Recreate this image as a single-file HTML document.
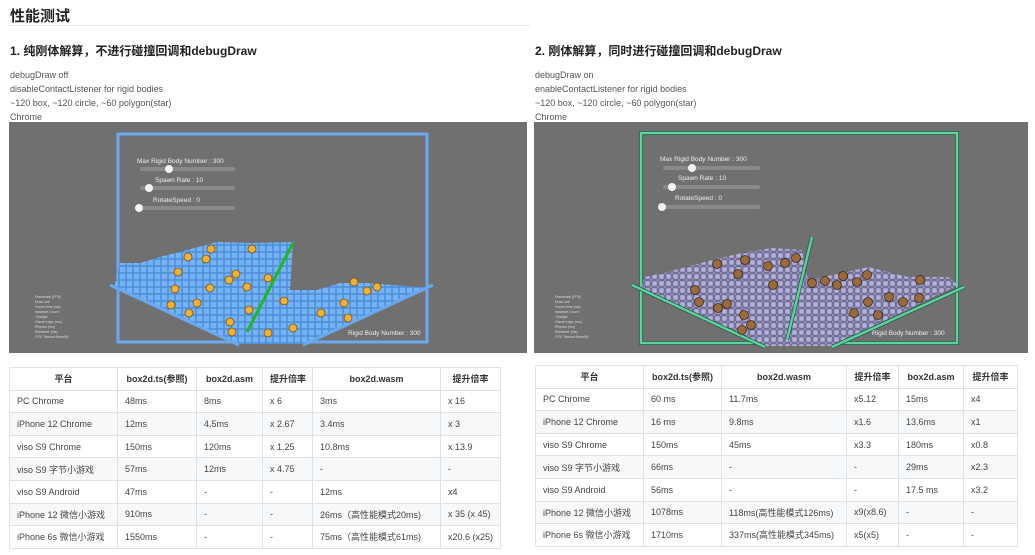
<!DOCTYPE html>
<html><head><meta charset="utf-8">
<style>
*{margin:0;padding:0;box-sizing:border-box}
body{width:1035px;height:555px;background:#fff;position:relative;overflow:hidden;font-family:"Liberation Sans","Noto Sans CJK SC",sans-serif;color:#333}
.a{position:absolute;white-space:nowrap}
.h1{left:10px;top:5px;font-size:15px;font-weight:bold;color:#222}
.hr{left:8px;top:25px;width:522px;height:1px;background:#e6e6e6}
.h2{font-size:12px;font-weight:bold;color:#222;top:42px}
.p{font-size:9px;color:#555;line-height:14px;top:68px}
table{position:absolute;border-collapse:collapse;font-size:9px;color:#444;table-layout:fixed}
td,th{border:1px solid #dfe2e5;height:22.6px;padding:0 7px;text-align:left;white-space:nowrap;overflow:hidden}
th{text-align:center;font-weight:bold;color:#333}
tr:nth-child(odd) td{background:#f6f8fa}
svg{position:absolute}
</style></head><body>
<div class="a h1">性能测试</div>
<div class="a hr"></div>
<div class="a h2" style="left:10px">1. 纯刚体解算，不进行碰撞回调和debugDraw</div>
<div class="a h2" style="left:535px">2. 刚体解算，同时进行碰撞回调和debugDraw</div>
<div class="a p" style="left:10px">debugDraw off<br>disableContactListener for rigid bodies<br>~120 box, ~120 circle, ~60 polygon(star)<br>Chrome</div>
<div class="a p" style="left:535px">debugDraw on<br>enableContactListener for rigid bodies<br>~120 box, ~120 circle, ~60 polygon(star)<br>Chrome</div>

<svg width="1035" height="555" style="left:0;top:0" font-family="Liberation Sans, sans-serif">
<defs>
<pattern id="pb" width="7" height="7" patternUnits="userSpaceOnUse"><rect width="7" height="7" fill="#4f8fd8"/><rect x="0.8" y="0.8" width="5.4" height="5.4" fill="#74b4f6"/></pattern>
<pattern id="pv" width="7" height="7" patternUnits="userSpaceOnUse"><rect width="7" height="7" fill="#b4b2dc"/><rect x="0.8" y="0.8" width="5.4" height="5.4" fill="none" stroke="#3c3a5c" stroke-width="0.7"/></pattern>
</defs>
<!-- left canvas -->
<rect x="9" y="122" width="518" height="231" fill="#707070"/>
<rect x="118" y="134" width="309" height="208" fill="none" stroke="#6aa8f0" stroke-width="3"/>
<polygon points="114,288 120,263 140,263 160,257 187,250 217,242 253,243 293,242 290,290 317,290 340,283 367,283 417,287 432,287 303,344 239,344" fill="url(#pb)"/>
<line x1="110" y1="285" x2="239" y2="345" stroke="#6aa8f0" stroke-width="3"/>
<line x1="303" y1="345" x2="433" y2="285" stroke="#6aa8f0" stroke-width="3"/>
<line x1="293" y1="243" x2="247" y2="332" stroke="#1fb81f" stroke-width="3"/>
<g fill="#f0b030" stroke="#7a5020" stroke-width="0.8">
<circle cx="188" cy="257" r="4"/><circle cx="211" cy="249" r="4"/><circle cx="206" cy="259" r="4"/><circle cx="178" cy="272" r="4"/><circle cx="229" cy="280" r="4"/><circle cx="252" cy="249" r="4"/><circle cx="236" cy="274" r="4"/><circle cx="268" cy="278" r="4"/><circle cx="175" cy="289" r="4"/><circle cx="210" cy="288" r="4"/><circle cx="247" cy="287" r="4"/><circle cx="171" cy="305" r="4"/><circle cx="197" cy="303" r="4"/><circle cx="189" cy="313" r="4"/><circle cx="249" cy="310" r="4"/><circle cx="230" cy="322" r="4"/><circle cx="232" cy="332" r="4"/><circle cx="268" cy="333" r="4"/><circle cx="284" cy="301" r="4"/><circle cx="293" cy="328" r="4"/><circle cx="321" cy="313" r="4"/><circle cx="344" cy="303" r="4"/><circle cx="348" cy="318" r="4"/><circle cx="354" cy="282" r="4"/><circle cx="367" cy="291" r="4"/><circle cx="377" cy="287" r="4"/>
</g>
<g font-size="6.5" fill="#eee">
<text x="137" y="163">Max Rigid Body Number :  300</text>
<text x="155" y="182">Spawn Rate :          10</text>
<text x="153" y="202">RotateSpeed :         0</text>
<text x="348" y="335">Rigid Body Number :  300</text>
</g>
<g fill="#8a8a8a"><rect x="140" y="167" width="95" height="4" rx="2"/><rect x="140" y="186" width="95" height="4" rx="2"/><rect x="140" y="206" width="95" height="4" rx="2"/></g>
<g fill="#f2f2f2"><circle cx="169" cy="169" r="4"/><circle cx="149" cy="188" r="4"/><circle cx="139" cy="208" r="4"/></g>
<g fill="#ddd"><rect x="35" y="296" width="30" height="44" fill="none"/>
<text x="35" y="298" font-size="3.5">Framerate (FPS)</text><text x="35" y="303" font-size="3.5">Draw call</text><text x="35" y="308" font-size="3.5">Frame time (ms)</text><text x="35" y="313" font-size="3.5">Instance Count</text><text x="35" y="318" font-size="3.5">Triangle</text><text x="35" y="323" font-size="3.5">Game Logic (ms)</text><text x="35" y="328" font-size="3.5">Physics (ms)</text><text x="35" y="333" font-size="3.5">Renderer (ms)</text><text x="35" y="338" font-size="3.5">GFX Texture Mem(M)</text></g>

<!-- right canvas -->
<rect x="534" y="122" width="494" height="231" fill="#707070"/>
<rect x="641" y="133" width="316" height="210" fill="none" stroke="#2a5a44" stroke-width="4"/>
<rect x="641" y="133" width="316" height="210" fill="none" stroke="#5fd2a2" stroke-width="2.4"/>
<polygon points="640,290 645,277 668,272 712,260 742,253 772,248 802,250 808,280 842,273 868,267 908,277 948,277 958,285 832,346 765,346" fill="url(#pv)"/>
<line x1="632" y1="285" x2="765" y2="347" stroke="#2a5a44" stroke-width="4"/>
<line x1="632" y1="285" x2="765" y2="347" stroke="#5fd2a2" stroke-width="2.4"/>
<line x1="832" y1="347" x2="964" y2="287" stroke="#2a5a44" stroke-width="4"/>
<line x1="832" y1="347" x2="964" y2="287" stroke="#5fd2a2" stroke-width="2.4"/>
<line x1="812" y1="237" x2="787" y2="340" stroke="#2a5a44" stroke-width="4"/>
<line x1="812" y1="237" x2="787" y2="340" stroke="#5fd2a2" stroke-width="2.4"/>
<g fill="#9a6a3a" stroke="#3a2a1a" stroke-width="0.8">
<circle cx="717" cy="264" r="4.5"/><circle cx="745" cy="260" r="4.5"/><circle cx="738" cy="274" r="4.5"/><circle cx="768" cy="266" r="4.5"/><circle cx="785" cy="263" r="4.5"/><circle cx="796" cy="258" r="4.5"/><circle cx="773" cy="285" r="4.5"/><circle cx="695" cy="290" r="4.5"/><circle cx="699" cy="302" r="4.5"/><circle cx="718" cy="308" r="4.5"/><circle cx="727" cy="304" r="4.5"/><circle cx="744" cy="315" r="4.5"/><circle cx="751" cy="325" r="4.5"/><circle cx="742" cy="330" r="4.5"/><circle cx="812" cy="283" r="4.5"/><circle cx="825" cy="281" r="4.5"/><circle cx="837" cy="285" r="4.5"/><circle cx="843" cy="276" r="4.5"/><circle cx="857" cy="282" r="4.5"/><circle cx="867" cy="275" r="4.5"/><circle cx="868" cy="302" r="4.5"/><circle cx="854" cy="313" r="4.5"/><circle cx="878" cy="315" r="4.5"/><circle cx="889" cy="297" r="4.5"/><circle cx="903" cy="302" r="4.5"/><circle cx="920" cy="280" r="4.5"/><circle cx="919" cy="298" r="4.5"/></g>
<g font-size="6.5" fill="#eee">
<text x="660" y="161">Max Rigid Body Number :  300</text>
<text x="678" y="180">Spawn Rate :          10</text>
<text x="675" y="200">RotateSpeed :         0</text>
<text x="872" y="335">Rigid Body Number :  300</text>
</g>
<g fill="#8a8a8a"><rect x="663" y="166" width="97" height="4" rx="2"/><rect x="663" y="185" width="97" height="4" rx="2"/><rect x="663" y="205" width="97" height="4" rx="2"/></g>
<g fill="#f2f2f2"><circle cx="692" cy="168" r="4"/><circle cx="672" cy="187" r="4"/><circle cx="662" cy="207" r="4"/></g>
<g fill="#ddd" font-size="3.5"><text x="555" y="298">Framerate (FPS)</text><text x="555" y="303">Draw call</text><text x="555" y="308">Frame time (ms)</text><text x="555" y="313">Instance Count</text><text x="555" y="318">Triangle</text><text x="555" y="323">Game Logic (ms)</text><text x="555" y="328">Physics (ms)</text><text x="555" y="333">Renderer (ms)</text><text x="555" y="338">GFX Texture Mem(M)</text></g>
</svg>

<table style="left:9px;top:367px;width:491px">
<colgroup><col style="width:108px"><col style="width:79px"><col style="width:66px"><col style="width:50px"><col style="width:128px"><col style="width:60px"></colgroup>
<tr><th>平台</th><th>box2d.ts(参照)</th><th>box2d.asm</th><th>提升倍率</th><th>box2d.wasm</th><th>提升倍率</th></tr>
<tr><td>PC Chrome</td><td>48ms</td><td>8ms</td><td>x 6</td><td>3ms</td><td>x 16</td></tr>
<tr><td>iPhone 12 Chrome</td><td>12ms</td><td>4.5ms</td><td>x 2.67</td><td>3.4ms</td><td>x 3</td></tr>
<tr><td>viso S9 Chrome</td><td>150ms</td><td>120ms</td><td>x 1.25</td><td>10.8ms</td><td>x 13.9</td></tr>
<tr><td>viso S9 字节小游戏</td><td>57ms</td><td>12ms</td><td>x 4.75</td><td>-</td><td>-</td></tr>
<tr><td>viso S9 Android</td><td>47ms</td><td>-</td><td>-</td><td>12ms</td><td>x4</td></tr>
<tr><td>iPhone 12 微信小游戏</td><td>910ms</td><td>-</td><td>-</td><td>26ms（高性能模式20ms)</td><td>x 35 (x 45)</td></tr>
<tr><td>iPhone 6s 微信小游戏</td><td>1550ms</td><td>-</td><td>-</td><td>75ms（高性能模式61ms)</td><td>x20.6 (x25)</td></tr>
</table>

<table style="left:535px;top:365px;width:482px">
<colgroup><col style="width:108px"><col style="width:78px"><col style="width:125px"><col style="width:52px"><col style="width:65px"><col style="width:54px"></colgroup>
<tr><th>平台</th><th>box2d.ts(参照)</th><th>box2d.wasm</th><th>提升倍率</th><th>box2d.asm</th><th>提升倍率</th></tr>
<tr><td>PC Chrome</td><td>60 ms</td><td>11.7ms</td><td>x5.12</td><td>15ms</td><td>x4</td></tr>
<tr><td>iPhone 12 Chrome</td><td>16 ms</td><td>9.8ms</td><td>x1.6</td><td>13.6ms</td><td>x1</td></tr>
<tr><td>viso S9 Chrome</td><td>150ms</td><td>45ms</td><td>x3.3</td><td>180ms</td><td>x0.8</td></tr>
<tr><td>viso S9 字节小游戏</td><td>66ms</td><td>-</td><td>-</td><td>29ms</td><td>x2.3</td></tr>
<tr><td>viso S9 Android</td><td>56ms</td><td>-</td><td>-</td><td>17.5 ms</td><td>x3.2</td></tr>
<tr><td>iPhone 12 微信小游戏</td><td>1078ms</td><td>118ms(高性能模式126ms)</td><td>x9(x8.6)</td><td>-</td><td>-</td></tr>
<tr><td>iPhone 6s 微信小游戏</td><td>1710ms</td><td>337ms(高性能模式345ms)</td><td>x5(x5)</td><td>-</td><td>-</td></tr>
</table>
</body></html>
